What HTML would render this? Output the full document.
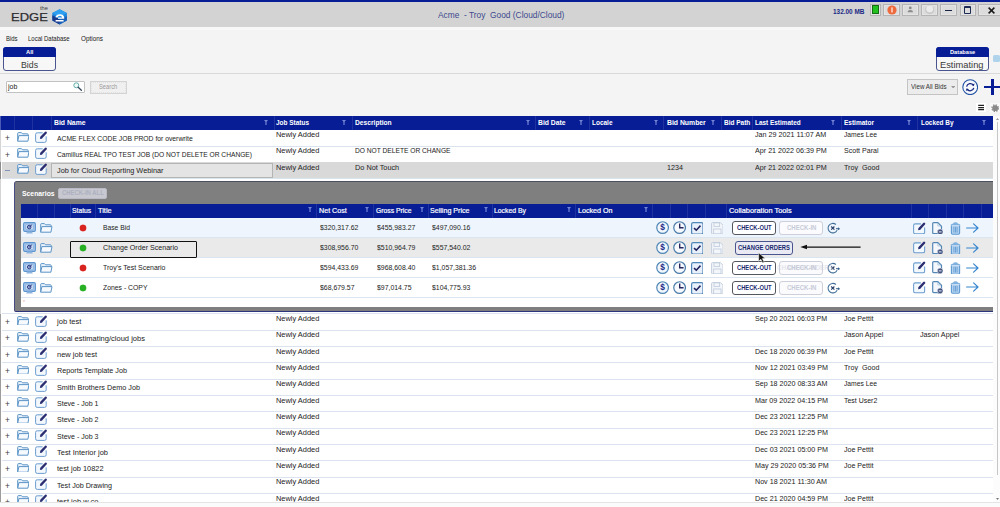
<!DOCTYPE html><html><head><meta charset="utf-8"><title>The EDGE - Bids</title><style>
html,body{margin:0;padding:0}
body{width:1000px;height:507px;overflow:hidden;position:relative;background:#f4f4f4;font-family:"Liberation Sans", sans-serif;}
.b{position:absolute;box-sizing:border-box;display:block}
.t{position:absolute;white-space:pre;}

</style></head><body>
<div class="b" style="left:0px;top:0px;width:1000px;height:2.2px;background:#061d96;"></div>
<div class="b" style="left:0px;top:2.2px;width:1000px;height:25px;background:#d3d3d3;"></div>
<div class="b" style="left:0px;top:27.2px;width:1000px;height:3.2px;background:#f8f8f8;"></div>
<div class="t" style="left:11.2px;top:11.20px;height:12px;line-height:12px;font-size:11.8px;color:#2d2d31;transform:scaleX(1.1006);transform-origin:0 50%;-webkit-text-stroke:0.25px #2d2d31;">EDGE</div>
<div class="t" style="left:40px;top:2.20px;height:12px;line-height:12px;font-size:5.4px;color:#3a3a3a;transform:scaleX(1.04);transform-origin:0 50%;">the</div>
<svg class="b" style="left:51.8px;top:9.2px;" width="15.2" height="15.6" viewBox="0 0 15.2 15.6"><path d="M7.6 0.2L14.9 4.1V11.5L7.6 15.4L0.3 11.5V4.1Z" fill="#1d86dc"/><path d="M7.6 0.2L14.9 4.1L7.6 8L0.3 4.1Z" fill="#2f9ff0"/><path d="M0.3 6.2L7.6 10V15.4L0.3 11.5Z" fill="#1b3a8e"/><path d="M7.6 10L14.9 7.2V11.5L7.6 15.4Z" fill="#1a5fb8"/><path d="M3.4 8.2Q4.4 5 8 5.2Q11.6 5.2 12.2 8.2V9.8H6V8.4H10.2Q9.6 6.8 7.8 6.8Q6 6.8 5.4 8.6Z" fill="#fff"/><path d="M3.6 11H11.6V12.5H3.6Z" fill="#fff"/></svg>
<div class="t" style="left:438.4px;top:9.80px;height:12px;line-height:12px;font-size:8.2px;color:#3c4a8e;transform:scaleX(1.0212);transform-origin:0 50%;">Acme  - Troy  Good (Cloud/Cloud)</div>
<div class="t" style="left:832.6px;top:5.50px;height:12px;line-height:12px;font-size:6.6px;color:#1b2a86;font-weight:bold;transform:scaleX(0.9732);transform-origin:0 50%;">132.00 MB</div>
<div class="b" style="left:870.4px;top:3.9px;width:10.4px;height:11.9px;background:#dcdcdc;border:1px solid #b4b4b4;box-shadow:inset 0 0 0 0.6px #e9e9e9;"></div>
<div class="b" style="left:872.4px;top:5.2px;width:6.4px;height:9px;background:#22c11f;border:1px solid #176d15;"></div>
<div class="b" style="left:883px;top:3.9px;width:16.8px;height:11.9px;background:#dcdcdc;border:1px solid #b4b4b4;box-shadow:inset 0 0 0 0.6px #e9e9e9;"></div>
<svg class="b" style="left:886.8px;top:4.8px;" width="10" height="10" viewBox="0 0 10 10"><circle cx="5" cy="5" r="4.6" fill="#ee6a3c"/><rect x="4.3" y="2.2" width="1.4" height="5.4" rx="0.6" fill="#fbe3d8"/></svg>
<div class="b" style="left:902px;top:3.9px;width:16.6px;height:11.9px;background:#dcdcdc;border:1px solid #b4b4b4;box-shadow:inset 0 0 0 0.6px #e9e9e9;"></div>
<svg class="b" style="left:907.1px;top:6.4px;" width="6.6" height="6.8" viewBox="0 0 8 8"><circle cx="4" cy="2.2" r="1.7" fill="#8b8b8b"/><path d="M0.8 7.4Q0.8 4.6 4 4.6Q7.2 4.6 7.2 7.4Z" fill="#8b8b8b"/></svg>
<div class="b" style="left:921px;top:3.9px;width:17px;height:11.9px;background:#dcdcdc;border:1px solid #b4b4b4;box-shadow:inset 0 0 0 0.6px #e9e9e9;"></div>
<svg class="b" style="left:924.9px;top:5.3px;" width="9.4" height="9.4" viewBox="0 0 9.4 9.4"><circle cx="4.7" cy="4.7" r="4.5" fill="#c6c6c6"/><circle cx="4.7" cy="3.9" r="3.5" fill="#ebebeb"/></svg>
<div class="b" style="left:940px;top:3.9px;width:17px;height:11.9px;background:#dcdcdc;border:1px solid #b4b4b4;box-shadow:inset 0 0 0 0.6px #e9e9e9;"></div>
<div class="b" style="left:945.2px;top:9.5px;width:7.2px;height:1.3px;background:#1a2346;"></div>
<div class="b" style="left:959.5px;top:3.9px;width:16.4px;height:11.9px;background:#dcdcdc;border:1px solid #b4b4b4;box-shadow:inset 0 0 0 0.6px #e9e9e9;"></div>
<div class="b" style="left:963.9px;top:6.2px;width:7.6px;height:7.5px;border:1.2px solid #1c2a56;border-top-width:2.6px;border-radius:1px;"></div>
<div class="b" style="left:978px;top:3.9px;width:24px;height:11.9px;background:#dcdcdc;border:1px solid #b4b4b4;box-shadow:inset 0 0 0 0.6px #e9e9e9;"></div>
<svg class="b" style="left:988.4px;top:6.6px;" width="7" height="7" viewBox="0 0 7 7"><path d="M0.6 0.6L6.4 6.4M6.4 0.6L0.6 6.4" stroke="#1a1a1a" stroke-width="1.5"/></svg>
<div class="t" style="left:5.9px;top:32.60px;height:12px;line-height:12px;font-size:6.6px;color:#1a1a1a;transform:scaleX(0.9043);transform-origin:0 50%;">Bids</div>
<div class="t" style="left:28px;top:32.60px;height:12px;line-height:12px;font-size:6.6px;color:#1a1a1a;transform:scaleX(0.9099);transform-origin:0 50%;">Local Database</div>
<div class="t" style="left:80.5px;top:32.60px;height:12px;line-height:12px;font-size:6.6px;color:#1a1a1a;transform:scaleX(0.9677);transform-origin:0 50%;">Options</div>
<div class="b" style="left:2.5px;top:47px;width:53.5px;height:23.5px;background:#f7f7f7;border:1px solid #4a558f;border-radius:3px;"></div>
<div class="b" style="left:2.5px;top:47px;width:53.5px;height:9.8px;background:#061d96;border-radius:3px 3px 0 0;"></div>
<div class="t" style="left:25.6px;top:46.00px;height:12px;line-height:12px;font-size:6.2px;color:#fff;font-weight:bold;transform:scaleX(0.9341);transform-origin:0 50%;">All</div>
<div class="t" style="left:20.7px;top:58.80px;height:12px;line-height:12px;font-size:9.4px;color:#3a3a3a;transform:scaleX(0.937);transform-origin:0 50%;">Bids</div>
<div class="b" style="left:935.6px;top:47px;width:53.2px;height:23.5px;background:#f7f7f7;border:1px solid #4a558f;border-radius:3px;"></div>
<div class="b" style="left:935.6px;top:47px;width:53.2px;height:9.8px;background:#061d96;border-radius:3px 3px 0 0;"></div>
<div class="t" style="left:949.8px;top:46.00px;height:12px;line-height:12px;font-size:6.2px;color:#fff;font-weight:bold;transform:scaleX(0.9158);transform-origin:0 50%;">Database</div>
<div class="t" style="left:940.4px;top:58.80px;height:12px;line-height:12px;font-size:9.4px;color:#3a3a3a;transform:scaleX(0.9936);transform-origin:0 50%;">Estimating</div>
<div class="b" style="left:993px;top:55px;width:7px;height:7px;background:#9fcbea;border-radius:1.5px;opacity:.8"></div>
<div class="b" style="left:0px;top:73px;width:1000px;height:1px;background:#d9d9d9;"></div>
<div class="b" style="left:6.3px;top:81px;width:78.4px;height:12.2px;background:#fff;border:1px solid #c2c2c2;border-radius:1px;"></div>
<div class="t" style="left:7.7px;top:81.40px;height:12px;line-height:12px;font-size:7.2px;color:#222;transform:scaleX(0.9694);transform-origin:0 50%;">job</div>
<svg class="b" style="left:73.2px;top:82.2px;" width="9.4" height="9.4" viewBox="0 0 9.4 9.4"><circle cx="3.3" cy="3.3" r="2.5" fill="#eefaf8" stroke="#55a5a2" stroke-width="0.9"/><path d="M5.2 5.2L8.4 8.2" stroke="#34465e" stroke-width="1.3" stroke-linecap="round"/></svg>
<div class="b" style="left:90.2px;top:80.6px;width:36.7px;height:13px;background:#f0f0f0;border:1px solid #d4d4d4;outline:1px dotted #e2e2e2;outline-offset:-2.5px;"></div>
<div class="t" style="left:99.4px;top:81.30px;height:12px;line-height:12px;font-size:6.6px;color:#9a9a9a;transform:scaleX(0.8706);transform-origin:0 50%;">Search</div>
<div class="b" style="left:907px;top:79.4px;width:50.6px;height:15.2px;background:#ececec;border:1px solid #c4c4c4;"></div>
<div class="t" style="left:910.5px;top:81.00px;height:12px;line-height:12px;font-size:6.8px;color:#333;transform:scaleX(0.915);transform-origin:0 50%;">View All Bids</div>
<svg class="b" style="left:950.6px;top:86px;" width="4" height="2.4" viewBox="0 0 4 2.4"><path d="M0 0H4.4L2.2 2.6Z" fill="#9a9a9a"/></svg>
<svg class="b" style="left:961.7px;top:78.8px;" width="16.4" height="16.4" viewBox="0 0 16.4 16.4"><circle cx="8.2" cy="8.2" r="7.4" fill="#f7fafd" stroke="#1f4fa3" stroke-width="1.05"/><path d="M4.6 7.6A3.8 3.8 0 0 1 11.4 6.2M11.8 8.8A3.8 3.8 0 0 1 5 10.2" fill="none" stroke="#1b2a86" stroke-width="1.3"/><path d="M12.6 4.4L11.8 7.2L9.4 5.8ZM3.8 12L4.6 9.2L7 10.6Z" fill="#1b2a86"/></svg>
<div class="b" style="left:984.4px;top:85.7px;width:16px;height:2.7px;background:#061d96;"></div>
<div class="b" style="left:991.2px;top:79px;width:2.7px;height:16px;background:#061d96;"></div>
<div class="b" style="left:975.8px;top:103px;width:10.1px;height:9px;background:#fff;"></div>
<svg class="b" style="left:978px;top:104px;" width="6.4" height="7" viewBox="0 0 6.4 7"><path d="M0.2 1.4H6.1M0.2 3.55H6.1M0.2 5.6H6.1" stroke="#222" stroke-width="1.3"/></svg>
<div class="b" style="left:990px;top:103px;width:10px;height:9px;background:#fafafa;"></div>
<svg class="b" style="left:990.5px;top:103.5px;" width="8.4" height="8.4" viewBox="0 0 8.4 8.4"><circle cx="4.2" cy="4.2" r="2.9" fill="#8a8a8a"/><circle cx="4.2" cy="4.2" r="3.3" fill="none" stroke="#8a8a8a" stroke-width="1.3" stroke-dasharray="1.3 1.3"/></svg>
<div class="b" style="left:0px;top:116px;width:1000px;height:391px;background:#fff;"></div>
<div class="b" style="left:0px;top:129.7px;width:1.3px;height:378px;background:#d4d4d4;"></div>
<div class="b" style="left:0px;top:162.4px;width:1.3px;height:16.2px;background:#8c8c8c;"></div>
<div class="b" style="left:0px;top:313.5px;width:1.3px;height:194px;background:#9c9c9c;"></div>
<div class="b" style="left:0px;top:116.2px;width:992.8px;height:13.5px;background:#061d96;border-left:1.3px solid #4b5ab4;"></div>
<div class="b" style="left:14px;top:116.2px;width:1px;height:13.5px;background:#1f32a0;"></div>
<div class="b" style="left:32px;top:116.2px;width:1px;height:13.5px;background:#1f32a0;"></div>
<div class="b" style="left:51px;top:116.2px;width:1px;height:13.5px;background:#1f32a0;"></div>
<div class="b" style="left:273.7px;top:116.2px;width:1px;height:13.5px;background:#1f32a0;"></div>
<div class="b" style="left:351.5px;top:116.2px;width:1px;height:13.5px;background:#1f32a0;"></div>
<div class="b" style="left:535.2px;top:116.2px;width:1px;height:13.5px;background:#1f32a0;"></div>
<div class="b" style="left:588.7px;top:116.2px;width:1px;height:13.5px;background:#1f32a0;"></div>
<div class="b" style="left:663.2px;top:116.2px;width:1px;height:13.5px;background:#1f32a0;"></div>
<div class="b" style="left:720.7px;top:116.2px;width:1px;height:13.5px;background:#1f32a0;"></div>
<div class="b" style="left:752px;top:116.2px;width:1px;height:13.5px;background:#1f32a0;"></div>
<div class="b" style="left:840.7px;top:116.2px;width:1px;height:13.5px;background:#1f32a0;"></div>
<div class="b" style="left:917px;top:116.2px;width:1px;height:13.5px;background:#1f32a0;"></div>
<div class="t" style="left:53.6px;top:117.20px;height:12px;line-height:12px;font-size:7.6px;color:#fff;font-weight:bold;transform:scaleX(0.8992);transform-origin:0 50%;">Bid Name</div>
<div class="t" style="left:276.2px;top:117.20px;height:12px;line-height:12px;font-size:7.6px;color:#fff;font-weight:bold;transform:scaleX(0.8499);transform-origin:0 50%;">Job Status</div>
<div class="t" style="left:354.5px;top:117.20px;height:12px;line-height:12px;font-size:7.6px;color:#fff;font-weight:bold;transform:scaleX(0.8784);transform-origin:0 50%;">Description</div>
<div class="t" style="left:538px;top:117.20px;height:12px;line-height:12px;font-size:7.6px;color:#fff;font-weight:bold;transform:scaleX(0.8925);transform-origin:0 50%;">Bid Date</div>
<div class="t" style="left:592px;top:117.20px;height:12px;line-height:12px;font-size:7.6px;color:#fff;font-weight:bold;transform:scaleX(0.8519);transform-origin:0 50%;">Locale</div>
<div class="t" style="left:666.7px;top:117.20px;height:12px;line-height:12px;font-size:7.6px;color:#fff;font-weight:bold;transform:scaleX(0.9013);transform-origin:0 50%;">Bid Number</div>
<div class="t" style="left:723.7px;top:117.20px;height:12px;line-height:12px;font-size:7.6px;color:#fff;font-weight:bold;transform:scaleX(0.8535);transform-origin:0 50%;">Bid Path</div>
<div class="t" style="left:755px;top:117.20px;height:12px;line-height:12px;font-size:7.6px;color:#fff;font-weight:bold;transform:scaleX(0.8458);transform-origin:0 50%;">Last Estimated</div>
<div class="t" style="left:844.2px;top:117.20px;height:12px;line-height:12px;font-size:7.6px;color:#fff;font-weight:bold;transform:scaleX(0.8564);transform-origin:0 50%;">Estimator</div>
<div class="t" style="left:920.5px;top:117.20px;height:12px;line-height:12px;font-size:7.6px;color:#fff;font-weight:bold;transform:scaleX(0.8462);transform-origin:0 50%;">Locked By</div>
<svg class="b" style="left:264px;top:119.9px;" width="4" height="5" viewBox="0 0 4 5"><path d="M0 0H4L2.6 1.8V5H1.4V1.8Z" fill="#7585d6"/></svg>
<svg class="b" style="left:341.7px;top:119.9px;" width="4" height="5" viewBox="0 0 4 5"><path d="M0 0H4L2.6 1.8V5H1.4V1.8Z" fill="#7585d6"/></svg>
<svg class="b" style="left:525.5px;top:119.9px;" width="4" height="5" viewBox="0 0 4 5"><path d="M0 0H4L2.6 1.8V5H1.4V1.8Z" fill="#7585d6"/></svg>
<svg class="b" style="left:578.7px;top:119.9px;" width="4" height="5" viewBox="0 0 4 5"><path d="M0 0H4L2.6 1.8V5H1.4V1.8Z" fill="#7585d6"/></svg>
<svg class="b" style="left:654.2px;top:119.9px;" width="4" height="5" viewBox="0 0 4 5"><path d="M0 0H4L2.6 1.8V5H1.4V1.8Z" fill="#7585d6"/></svg>
<svg class="b" style="left:711.2px;top:119.9px;" width="4" height="5" viewBox="0 0 4 5"><path d="M0 0H4L2.6 1.8V5H1.4V1.8Z" fill="#7585d6"/></svg>
<svg class="b" style="left:831.2px;top:119.9px;" width="4" height="5" viewBox="0 0 4 5"><path d="M0 0H4L2.6 1.8V5H1.4V1.8Z" fill="#7585d6"/></svg>
<svg class="b" style="left:907.2px;top:119.9px;" width="4" height="5" viewBox="0 0 4 5"><path d="M0 0H4L2.6 1.8V5H1.4V1.8Z" fill="#7585d6"/></svg>
<svg class="b" style="left:982.2px;top:119.9px;" width="4" height="5" viewBox="0 0 4 5"><path d="M0 0H4L2.6 1.8V5H1.4V1.8Z" fill="#7585d6"/></svg>
<div class="b" style="left:1.5px;top:145.7px;width:991.3px;height:1px;background:#dae3ee;"></div>
<div class="t" style="left:5.1px;top:132.40px;height:12px;line-height:12px;font-size:8.4px;color:#3a3a3a;">+</div>
<svg class="b" style="left:16.5px;top:131.89999999999998px;" width="12.6" height="9.8" viewBox="0 0 12.6 9.8"><path d="M0.7 9.2V1.4Q0.7 0.6 1.5 0.6H4.4L5.5 1.8H10.4Q11.2 1.8 11.2 2.6V3.6" fill="#eaf3fc" stroke="#5b94c6" stroke-width="1"/><path d="M0.7 9.2L1.9 3.6H12L10.9 9.2Z" fill="#f6fafe" stroke="#5b94c6" stroke-width="1" stroke-linejoin="round"/></svg>
<svg class="b" style="left:34.900000000000006px;top:130.79999999999998px;" width="12.6" height="12.0" viewBox="0 0 12.6 12"><path d="M7.6 1.8H2.2Q0.6 1.8 0.6 3.4V9.8Q0.6 11.4 2.2 11.4H9.6Q11.2 11.4 11.2 9.8V5.4" fill="#f3f8fd" stroke="#6a9dd0" stroke-width="1"/><path d="M6.6 6.1L10.7 1.7" stroke="#2b2f72" stroke-width="2.3" stroke-linecap="round"/><path d="M4.9 8L5.4 5.5L7.4 7.4Z" fill="#2b2f72"/></svg>
<div class="t" style="left:57.2px;top:132.60px;height:12px;line-height:12px;font-size:7.4px;color:#222;transform:scaleX(0.9179);transform-origin:0 50%;">ACME FLEX CODE JOB PROD for overwrite</div>
<div class="t" style="left:276.2px;top:129.20px;height:12px;line-height:12px;font-size:7.4px;color:#222;transform:scaleX(1.0037);transform-origin:0 50%;">Newly Added</div>
<div class="t" style="left:754.5px;top:129.20px;height:12px;line-height:12px;font-size:7.4px;color:#222;transform:scaleX(0.9697);transform-origin:0 50%;">Jan 29 2021 11:07 AM</div>
<div class="t" style="left:843.7px;top:129.20px;height:12px;line-height:12px;font-size:7.4px;color:#222;transform:scaleX(0.9127);transform-origin:0 50%;">James Lee</div>
<div class="b" style="left:1.5px;top:161.89999999999998px;width:991.3px;height:1px;background:#dae3ee;"></div>
<div class="t" style="left:5.1px;top:148.60px;height:12px;line-height:12px;font-size:8.4px;color:#3a3a3a;">+</div>
<svg class="b" style="left:16.5px;top:148.09999999999997px;" width="12.6" height="9.8" viewBox="0 0 12.6 9.8"><path d="M0.7 9.2V1.4Q0.7 0.6 1.5 0.6H4.4L5.5 1.8H10.4Q11.2 1.8 11.2 2.6V3.6" fill="#eaf3fc" stroke="#5b94c6" stroke-width="1"/><path d="M0.7 9.2L1.9 3.6H12L10.9 9.2Z" fill="#f6fafe" stroke="#5b94c6" stroke-width="1" stroke-linejoin="round"/></svg>
<svg class="b" style="left:34.900000000000006px;top:146.99999999999997px;" width="12.6" height="12.0" viewBox="0 0 12.6 12"><path d="M7.6 1.8H2.2Q0.6 1.8 0.6 3.4V9.8Q0.6 11.4 2.2 11.4H9.6Q11.2 11.4 11.2 9.8V5.4" fill="#f3f8fd" stroke="#6a9dd0" stroke-width="1"/><path d="M6.6 6.1L10.7 1.7" stroke="#2b2f72" stroke-width="2.3" stroke-linecap="round"/><path d="M4.9 8L5.4 5.5L7.4 7.4Z" fill="#2b2f72"/></svg>
<div class="t" style="left:57.2px;top:148.80px;height:12px;line-height:12px;font-size:7.4px;color:#222;transform:scaleX(0.8993);transform-origin:0 50%;">Camillus REAL TPO TEST JOB (DO NOT DELETE OR CHANGE)</div>
<div class="t" style="left:276.2px;top:145.40px;height:12px;line-height:12px;font-size:7.4px;color:#222;transform:scaleX(1.0037);transform-origin:0 50%;">Newly Added</div>
<div class="t" style="left:354.5px;top:145.40px;height:12px;line-height:12px;font-size:7.4px;color:#222;transform:scaleX(0.899);transform-origin:0 50%;">DO NOT DELETE OR CHANGE</div>
<div class="t" style="left:754.5px;top:145.40px;height:12px;line-height:12px;font-size:7.4px;color:#222;transform:scaleX(0.9693);transform-origin:0 50%;">Apr 21 2022 06:39 PM</div>
<div class="t" style="left:843.7px;top:145.40px;height:12px;line-height:12px;font-size:7.4px;color:#222;transform:scaleX(0.9542);transform-origin:0 50%;">Scott Paral</div>
<div class="b" style="left:1.5px;top:162.4px;width:991.3px;height:16.2px;background:#d9d9d9;"></div>
<div class="b" style="left:51.2px;top:163.0px;width:221.6px;height:15.0px;background:#e4e4e4;border:1px solid #b4b4b4;"></div>
<div class="b" style="left:1.5px;top:178.1px;width:991.3px;height:1px;background:#dae3ee;"></div>
<div class="b" style="left:5px;top:170.4px;width:5.2px;height:1.1px;background:#8093b8;"></div>
<svg class="b" style="left:16.5px;top:164.29999999999998px;" width="12.6" height="9.8" viewBox="0 0 12.6 9.8"><path d="M0.7 9.2V1.4Q0.7 0.6 1.5 0.6H4.4L5.5 1.8H10.4Q11.2 1.8 11.2 2.6V3.6" fill="#eaf3fc" stroke="#5b94c6" stroke-width="1"/><path d="M0.7 9.2L1.9 3.6H12L10.9 9.2Z" fill="#f6fafe" stroke="#5b94c6" stroke-width="1" stroke-linejoin="round"/></svg>
<svg class="b" style="left:34.900000000000006px;top:163.2px;" width="12.6" height="12.0" viewBox="0 0 12.6 12"><path d="M7.6 1.8H2.2Q0.6 1.8 0.6 3.4V9.8Q0.6 11.4 2.2 11.4H9.6Q11.2 11.4 11.2 9.8V5.4" fill="#f3f8fd" stroke="#6a9dd0" stroke-width="1"/><path d="M6.6 6.1L10.7 1.7" stroke="#2b2f72" stroke-width="2.3" stroke-linecap="round"/><path d="M4.9 8L5.4 5.5L7.4 7.4Z" fill="#2b2f72"/></svg>
<div class="t" style="left:57.2px;top:165.00px;height:12px;line-height:12px;font-size:7.4px;color:#222;transform:scaleX(0.9907);transform-origin:0 50%;">Job for Cloud Reporting Webinar</div>
<div class="t" style="left:276.2px;top:161.60px;height:12px;line-height:12px;font-size:7.4px;color:#222;transform:scaleX(1.0037);transform-origin:0 50%;">Newly Added</div>
<div class="t" style="left:354.5px;top:161.60px;height:12px;line-height:12px;font-size:7.4px;color:#222;transform:scaleX(0.9898);transform-origin:0 50%;">Do Not Touch</div>
<div class="t" style="left:666.5px;top:161.60px;height:12px;line-height:12px;font-size:7.4px;color:#222;transform:scaleX(0.9725);transform-origin:0 50%;">1234</div>
<div class="t" style="left:754.5px;top:161.60px;height:12px;line-height:12px;font-size:7.4px;color:#222;transform:scaleX(0.9693);transform-origin:0 50%;">Apr 21 2022 02:01 PM</div>
<div class="t" style="left:843.7px;top:161.60px;height:12px;line-height:12px;font-size:7.4px;color:#222;transform:scaleX(0.9672);transform-origin:0 50%;">Troy  Good</div>
<div class="b" style="left:1.5px;top:313.2px;width:991.3px;height:1px;background:#dae3ee;"></div>
<div class="b" style="left:1.5px;top:329.53999999999996px;width:991.3px;height:1px;background:#dae3ee;"></div>
<div class="t" style="left:5.1px;top:316.10px;height:12px;line-height:12px;font-size:8.4px;color:#3a3a3a;">+</div>
<svg class="b" style="left:16.5px;top:315.6px;" width="12.6" height="9.8" viewBox="0 0 12.6 9.8"><path d="M0.7 9.2V1.4Q0.7 0.6 1.5 0.6H4.4L5.5 1.8H10.4Q11.2 1.8 11.2 2.6V3.6" fill="#eaf3fc" stroke="#5b94c6" stroke-width="1"/><path d="M0.7 9.2L1.9 3.6H12L10.9 9.2Z" fill="#f6fafe" stroke="#5b94c6" stroke-width="1" stroke-linejoin="round"/></svg>
<svg class="b" style="left:34.900000000000006px;top:314.5px;" width="12.6" height="12.0" viewBox="0 0 12.6 12"><path d="M7.6 1.8H2.2Q0.6 1.8 0.6 3.4V9.8Q0.6 11.4 2.2 11.4H9.6Q11.2 11.4 11.2 9.8V5.4" fill="#f3f8fd" stroke="#6a9dd0" stroke-width="1"/><path d="M6.6 6.1L10.7 1.7" stroke="#2b2f72" stroke-width="2.3" stroke-linecap="round"/><path d="M4.9 8L5.4 5.5L7.4 7.4Z" fill="#2b2f72"/></svg>
<div class="t" style="left:57.2px;top:316.30px;height:12px;line-height:12px;font-size:7.4px;color:#222;transform:scaleX(1.0275);transform-origin:0 50%;">job test</div>
<div class="t" style="left:276.2px;top:312.90px;height:12px;line-height:12px;font-size:7.4px;color:#222;transform:scaleX(1.0037);transform-origin:0 50%;">Newly Added</div>
<div class="t" style="left:754.5px;top:312.90px;height:12px;line-height:12px;font-size:7.4px;color:#222;transform:scaleX(0.9549);transform-origin:0 50%;">Sep 20 2021 06:03 PM</div>
<div class="t" style="left:843.7px;top:312.90px;height:12px;line-height:12px;font-size:7.4px;color:#222;transform:scaleX(0.9574);transform-origin:0 50%;">Joe Pettit</div>
<div class="b" style="left:1.5px;top:345.87999999999994px;width:991.3px;height:1px;background:#dae3ee;"></div>
<div class="t" style="left:5.1px;top:332.44px;height:12px;line-height:12px;font-size:8.4px;color:#3a3a3a;">+</div>
<svg class="b" style="left:16.5px;top:331.94px;" width="12.6" height="9.8" viewBox="0 0 12.6 9.8"><path d="M0.7 9.2V1.4Q0.7 0.6 1.5 0.6H4.4L5.5 1.8H10.4Q11.2 1.8 11.2 2.6V3.6" fill="#eaf3fc" stroke="#5b94c6" stroke-width="1"/><path d="M0.7 9.2L1.9 3.6H12L10.9 9.2Z" fill="#f6fafe" stroke="#5b94c6" stroke-width="1" stroke-linejoin="round"/></svg>
<svg class="b" style="left:34.900000000000006px;top:330.84px;" width="12.6" height="12.0" viewBox="0 0 12.6 12"><path d="M7.6 1.8H2.2Q0.6 1.8 0.6 3.4V9.8Q0.6 11.4 2.2 11.4H9.6Q11.2 11.4 11.2 9.8V5.4" fill="#f3f8fd" stroke="#6a9dd0" stroke-width="1"/><path d="M6.6 6.1L10.7 1.7" stroke="#2b2f72" stroke-width="2.3" stroke-linecap="round"/><path d="M4.9 8L5.4 5.5L7.4 7.4Z" fill="#2b2f72"/></svg>
<div class="t" style="left:57.2px;top:332.64px;height:12px;line-height:12px;font-size:7.4px;color:#222;transform:scaleX(1.0199);transform-origin:0 50%;">local estimating/cloud jobs</div>
<div class="t" style="left:276.2px;top:329.24px;height:12px;line-height:12px;font-size:7.4px;color:#222;transform:scaleX(1.0037);transform-origin:0 50%;">Newly Added</div>
<div class="t" style="left:843.7px;top:329.24px;height:12px;line-height:12px;font-size:7.4px;color:#222;transform:scaleX(0.9756);transform-origin:0 50%;">Jason Appel</div>
<div class="t" style="left:920px;top:329.24px;height:12px;line-height:12px;font-size:7.4px;color:#222;transform:scaleX(0.9756);transform-origin:0 50%;">Jason Appel</div>
<div class="b" style="left:1.5px;top:362.21999999999997px;width:991.3px;height:1px;background:#dae3ee;"></div>
<div class="t" style="left:5.1px;top:348.78px;height:12px;line-height:12px;font-size:8.4px;color:#3a3a3a;">+</div>
<svg class="b" style="left:16.5px;top:348.28000000000003px;" width="12.6" height="9.8" viewBox="0 0 12.6 9.8"><path d="M0.7 9.2V1.4Q0.7 0.6 1.5 0.6H4.4L5.5 1.8H10.4Q11.2 1.8 11.2 2.6V3.6" fill="#eaf3fc" stroke="#5b94c6" stroke-width="1"/><path d="M0.7 9.2L1.9 3.6H12L10.9 9.2Z" fill="#f6fafe" stroke="#5b94c6" stroke-width="1" stroke-linejoin="round"/></svg>
<svg class="b" style="left:34.900000000000006px;top:347.18px;" width="12.6" height="12.0" viewBox="0 0 12.6 12"><path d="M7.6 1.8H2.2Q0.6 1.8 0.6 3.4V9.8Q0.6 11.4 2.2 11.4H9.6Q11.2 11.4 11.2 9.8V5.4" fill="#f3f8fd" stroke="#6a9dd0" stroke-width="1"/><path d="M6.6 6.1L10.7 1.7" stroke="#2b2f72" stroke-width="2.3" stroke-linecap="round"/><path d="M4.9 8L5.4 5.5L7.4 7.4Z" fill="#2b2f72"/></svg>
<div class="t" style="left:57.2px;top:348.98px;height:12px;line-height:12px;font-size:7.4px;color:#222;transform:scaleX(1.0139);transform-origin:0 50%;">new job test</div>
<div class="t" style="left:276.2px;top:345.58px;height:12px;line-height:12px;font-size:7.4px;color:#222;transform:scaleX(1.0037);transform-origin:0 50%;">Newly Added</div>
<div class="t" style="left:754.5px;top:345.58px;height:12px;line-height:12px;font-size:7.4px;color:#222;transform:scaleX(0.9549);transform-origin:0 50%;">Dec 18 2020 06:39 PM</div>
<div class="t" style="left:843.7px;top:345.58px;height:12px;line-height:12px;font-size:7.4px;color:#222;transform:scaleX(0.9574);transform-origin:0 50%;">Joe Pettit</div>
<div class="b" style="left:1.5px;top:378.55999999999995px;width:991.3px;height:1px;background:#dae3ee;"></div>
<div class="t" style="left:5.1px;top:365.12px;height:12px;line-height:12px;font-size:8.4px;color:#3a3a3a;">+</div>
<svg class="b" style="left:16.5px;top:364.62px;" width="12.6" height="9.8" viewBox="0 0 12.6 9.8"><path d="M0.7 9.2V1.4Q0.7 0.6 1.5 0.6H4.4L5.5 1.8H10.4Q11.2 1.8 11.2 2.6V3.6" fill="#eaf3fc" stroke="#5b94c6" stroke-width="1"/><path d="M0.7 9.2L1.9 3.6H12L10.9 9.2Z" fill="#f6fafe" stroke="#5b94c6" stroke-width="1" stroke-linejoin="round"/></svg>
<svg class="b" style="left:34.900000000000006px;top:363.52px;" width="12.6" height="12.0" viewBox="0 0 12.6 12"><path d="M7.6 1.8H2.2Q0.6 1.8 0.6 3.4V9.8Q0.6 11.4 2.2 11.4H9.6Q11.2 11.4 11.2 9.8V5.4" fill="#f3f8fd" stroke="#6a9dd0" stroke-width="1"/><path d="M6.6 6.1L10.7 1.7" stroke="#2b2f72" stroke-width="2.3" stroke-linecap="round"/><path d="M4.9 8L5.4 5.5L7.4 7.4Z" fill="#2b2f72"/></svg>
<div class="t" style="left:57.2px;top:365.32px;height:12px;line-height:12px;font-size:7.4px;color:#222;transform:scaleX(0.9754);transform-origin:0 50%;">Reports Template Job</div>
<div class="t" style="left:276.2px;top:361.92px;height:12px;line-height:12px;font-size:7.4px;color:#222;transform:scaleX(1.0037);transform-origin:0 50%;">Newly Added</div>
<div class="t" style="left:754.5px;top:361.92px;height:12px;line-height:12px;font-size:7.4px;color:#222;transform:scaleX(0.9655);transform-origin:0 50%;">Nov 12 2021 03:49 PM</div>
<div class="t" style="left:843.7px;top:361.92px;height:12px;line-height:12px;font-size:7.4px;color:#222;transform:scaleX(0.9672);transform-origin:0 50%;">Troy  Good</div>
<div class="b" style="left:1.5px;top:394.9px;width:991.3px;height:1px;background:#dae3ee;"></div>
<div class="t" style="left:5.1px;top:381.46px;height:12px;line-height:12px;font-size:8.4px;color:#3a3a3a;">+</div>
<svg class="b" style="left:16.5px;top:380.96000000000004px;" width="12.6" height="9.8" viewBox="0 0 12.6 9.8"><path d="M0.7 9.2V1.4Q0.7 0.6 1.5 0.6H4.4L5.5 1.8H10.4Q11.2 1.8 11.2 2.6V3.6" fill="#eaf3fc" stroke="#5b94c6" stroke-width="1"/><path d="M0.7 9.2L1.9 3.6H12L10.9 9.2Z" fill="#f6fafe" stroke="#5b94c6" stroke-width="1" stroke-linejoin="round"/></svg>
<svg class="b" style="left:34.900000000000006px;top:379.86px;" width="12.6" height="12.0" viewBox="0 0 12.6 12"><path d="M7.6 1.8H2.2Q0.6 1.8 0.6 3.4V9.8Q0.6 11.4 2.2 11.4H9.6Q11.2 11.4 11.2 9.8V5.4" fill="#f3f8fd" stroke="#6a9dd0" stroke-width="1"/><path d="M6.6 6.1L10.7 1.7" stroke="#2b2f72" stroke-width="2.3" stroke-linecap="round"/><path d="M4.9 8L5.4 5.5L7.4 7.4Z" fill="#2b2f72"/></svg>
<div class="t" style="left:57.2px;top:381.66px;height:12px;line-height:12px;font-size:7.4px;color:#222;transform:scaleX(0.9808);transform-origin:0 50%;">Smith Brothers Demo Job</div>
<div class="t" style="left:276.2px;top:378.26px;height:12px;line-height:12px;font-size:7.4px;color:#222;transform:scaleX(1.0037);transform-origin:0 50%;">Newly Added</div>
<div class="t" style="left:754.5px;top:378.26px;height:12px;line-height:12px;font-size:7.4px;color:#222;transform:scaleX(0.9641);transform-origin:0 50%;">Sep 18 2020 08:33 AM</div>
<div class="t" style="left:843.7px;top:378.26px;height:12px;line-height:12px;font-size:7.4px;color:#222;transform:scaleX(0.9127);transform-origin:0 50%;">James Lee</div>
<div class="b" style="left:1.5px;top:411.23999999999995px;width:991.3px;height:1px;background:#dae3ee;"></div>
<div class="t" style="left:5.1px;top:397.80px;height:12px;line-height:12px;font-size:8.4px;color:#3a3a3a;">+</div>
<svg class="b" style="left:16.5px;top:397.3px;" width="12.6" height="9.8" viewBox="0 0 12.6 9.8"><path d="M0.7 9.2V1.4Q0.7 0.6 1.5 0.6H4.4L5.5 1.8H10.4Q11.2 1.8 11.2 2.6V3.6" fill="#eaf3fc" stroke="#5b94c6" stroke-width="1"/><path d="M0.7 9.2L1.9 3.6H12L10.9 9.2Z" fill="#f6fafe" stroke="#5b94c6" stroke-width="1" stroke-linejoin="round"/></svg>
<svg class="b" style="left:34.900000000000006px;top:396.2px;" width="12.6" height="12.0" viewBox="0 0 12.6 12"><path d="M7.6 1.8H2.2Q0.6 1.8 0.6 3.4V9.8Q0.6 11.4 2.2 11.4H9.6Q11.2 11.4 11.2 9.8V5.4" fill="#f3f8fd" stroke="#6a9dd0" stroke-width="1"/><path d="M6.6 6.1L10.7 1.7" stroke="#2b2f72" stroke-width="2.3" stroke-linecap="round"/><path d="M4.9 8L5.4 5.5L7.4 7.4Z" fill="#2b2f72"/></svg>
<div class="t" style="left:57.2px;top:398.00px;height:12px;line-height:12px;font-size:7.4px;color:#222;transform:scaleX(0.953);transform-origin:0 50%;">Steve - Job 1</div>
<div class="t" style="left:276.2px;top:394.60px;height:12px;line-height:12px;font-size:7.4px;color:#222;transform:scaleX(1.0037);transform-origin:0 50%;">Newly Added</div>
<div class="t" style="left:754.5px;top:394.60px;height:12px;line-height:12px;font-size:7.4px;color:#222;transform:scaleX(0.9709);transform-origin:0 50%;">Mar 09 2022 04:15 PM</div>
<div class="t" style="left:843.7px;top:394.60px;height:12px;line-height:12px;font-size:7.4px;color:#222;transform:scaleX(0.9426);transform-origin:0 50%;">Test User2</div>
<div class="b" style="left:1.5px;top:427.58px;width:991.3px;height:1px;background:#dae3ee;"></div>
<div class="t" style="left:5.1px;top:414.14px;height:12px;line-height:12px;font-size:8.4px;color:#3a3a3a;">+</div>
<svg class="b" style="left:16.5px;top:413.64000000000004px;" width="12.6" height="9.8" viewBox="0 0 12.6 9.8"><path d="M0.7 9.2V1.4Q0.7 0.6 1.5 0.6H4.4L5.5 1.8H10.4Q11.2 1.8 11.2 2.6V3.6" fill="#eaf3fc" stroke="#5b94c6" stroke-width="1"/><path d="M0.7 9.2L1.9 3.6H12L10.9 9.2Z" fill="#f6fafe" stroke="#5b94c6" stroke-width="1" stroke-linejoin="round"/></svg>
<svg class="b" style="left:34.900000000000006px;top:412.54px;" width="12.6" height="12.0" viewBox="0 0 12.6 12"><path d="M7.6 1.8H2.2Q0.6 1.8 0.6 3.4V9.8Q0.6 11.4 2.2 11.4H9.6Q11.2 11.4 11.2 9.8V5.4" fill="#f3f8fd" stroke="#6a9dd0" stroke-width="1"/><path d="M6.6 6.1L10.7 1.7" stroke="#2b2f72" stroke-width="2.3" stroke-linecap="round"/><path d="M4.9 8L5.4 5.5L7.4 7.4Z" fill="#2b2f72"/></svg>
<div class="t" style="left:57.2px;top:414.34px;height:12px;line-height:12px;font-size:7.4px;color:#222;transform:scaleX(0.953);transform-origin:0 50%;">Steve - Job 2</div>
<div class="t" style="left:276.2px;top:410.94px;height:12px;line-height:12px;font-size:7.4px;color:#222;transform:scaleX(1.0037);transform-origin:0 50%;">Newly Added</div>
<div class="t" style="left:754.5px;top:410.94px;height:12px;line-height:12px;font-size:7.4px;color:#222;transform:scaleX(0.965);transform-origin:0 50%;">Dec 23 2021 12:25 PM</div>
<div class="b" style="left:1.5px;top:443.91999999999996px;width:991.3px;height:1px;background:#dae3ee;"></div>
<div class="t" style="left:5.1px;top:430.48px;height:12px;line-height:12px;font-size:8.4px;color:#3a3a3a;">+</div>
<svg class="b" style="left:16.5px;top:429.98px;" width="12.6" height="9.8" viewBox="0 0 12.6 9.8"><path d="M0.7 9.2V1.4Q0.7 0.6 1.5 0.6H4.4L5.5 1.8H10.4Q11.2 1.8 11.2 2.6V3.6" fill="#eaf3fc" stroke="#5b94c6" stroke-width="1"/><path d="M0.7 9.2L1.9 3.6H12L10.9 9.2Z" fill="#f6fafe" stroke="#5b94c6" stroke-width="1" stroke-linejoin="round"/></svg>
<svg class="b" style="left:34.900000000000006px;top:428.88px;" width="12.6" height="12.0" viewBox="0 0 12.6 12"><path d="M7.6 1.8H2.2Q0.6 1.8 0.6 3.4V9.8Q0.6 11.4 2.2 11.4H9.6Q11.2 11.4 11.2 9.8V5.4" fill="#f3f8fd" stroke="#6a9dd0" stroke-width="1"/><path d="M6.6 6.1L10.7 1.7" stroke="#2b2f72" stroke-width="2.3" stroke-linecap="round"/><path d="M4.9 8L5.4 5.5L7.4 7.4Z" fill="#2b2f72"/></svg>
<div class="t" style="left:57.2px;top:430.68px;height:12px;line-height:12px;font-size:7.4px;color:#222;transform:scaleX(0.953);transform-origin:0 50%;">Steve - Job 3</div>
<div class="t" style="left:276.2px;top:427.28px;height:12px;line-height:12px;font-size:7.4px;color:#222;transform:scaleX(1.0037);transform-origin:0 50%;">Newly Added</div>
<div class="t" style="left:754.5px;top:427.28px;height:12px;line-height:12px;font-size:7.4px;color:#222;transform:scaleX(0.965);transform-origin:0 50%;">Dec 23 2021 12:25 PM</div>
<div class="b" style="left:1.5px;top:460.25999999999993px;width:991.3px;height:1px;background:#dae3ee;"></div>
<div class="t" style="left:5.1px;top:446.82px;height:12px;line-height:12px;font-size:8.4px;color:#3a3a3a;">+</div>
<svg class="b" style="left:16.5px;top:446.32px;" width="12.6" height="9.8" viewBox="0 0 12.6 9.8"><path d="M0.7 9.2V1.4Q0.7 0.6 1.5 0.6H4.4L5.5 1.8H10.4Q11.2 1.8 11.2 2.6V3.6" fill="#eaf3fc" stroke="#5b94c6" stroke-width="1"/><path d="M0.7 9.2L1.9 3.6H12L10.9 9.2Z" fill="#f6fafe" stroke="#5b94c6" stroke-width="1" stroke-linejoin="round"/></svg>
<svg class="b" style="left:34.900000000000006px;top:445.21999999999997px;" width="12.6" height="12.0" viewBox="0 0 12.6 12"><path d="M7.6 1.8H2.2Q0.6 1.8 0.6 3.4V9.8Q0.6 11.4 2.2 11.4H9.6Q11.2 11.4 11.2 9.8V5.4" fill="#f3f8fd" stroke="#6a9dd0" stroke-width="1"/><path d="M6.6 6.1L10.7 1.7" stroke="#2b2f72" stroke-width="2.3" stroke-linecap="round"/><path d="M4.9 8L5.4 5.5L7.4 7.4Z" fill="#2b2f72"/></svg>
<div class="t" style="left:57.2px;top:447.02px;height:12px;line-height:12px;font-size:7.4px;color:#222;transform:scaleX(1.0093);transform-origin:0 50%;">Test Interior job</div>
<div class="t" style="left:276.2px;top:443.62px;height:12px;line-height:12px;font-size:7.4px;color:#222;transform:scaleX(1.0037);transform-origin:0 50%;">Newly Added</div>
<div class="t" style="left:754.5px;top:443.62px;height:12px;line-height:12px;font-size:7.4px;color:#222;transform:scaleX(0.965);transform-origin:0 50%;">Dec 03 2021 05:00 PM</div>
<div class="t" style="left:843.7px;top:443.62px;height:12px;line-height:12px;font-size:7.4px;color:#222;transform:scaleX(0.9574);transform-origin:0 50%;">Joe Pettit</div>
<div class="b" style="left:1.5px;top:476.59999999999997px;width:991.3px;height:1px;background:#dae3ee;"></div>
<div class="t" style="left:5.1px;top:463.16px;height:12px;line-height:12px;font-size:8.4px;color:#3a3a3a;">+</div>
<svg class="b" style="left:16.5px;top:462.66px;" width="12.6" height="9.8" viewBox="0 0 12.6 9.8"><path d="M0.7 9.2V1.4Q0.7 0.6 1.5 0.6H4.4L5.5 1.8H10.4Q11.2 1.8 11.2 2.6V3.6" fill="#eaf3fc" stroke="#5b94c6" stroke-width="1"/><path d="M0.7 9.2L1.9 3.6H12L10.9 9.2Z" fill="#f6fafe" stroke="#5b94c6" stroke-width="1" stroke-linejoin="round"/></svg>
<svg class="b" style="left:34.900000000000006px;top:461.56px;" width="12.6" height="12.0" viewBox="0 0 12.6 12"><path d="M7.6 1.8H2.2Q0.6 1.8 0.6 3.4V9.8Q0.6 11.4 2.2 11.4H9.6Q11.2 11.4 11.2 9.8V5.4" fill="#f3f8fd" stroke="#6a9dd0" stroke-width="1"/><path d="M6.6 6.1L10.7 1.7" stroke="#2b2f72" stroke-width="2.3" stroke-linecap="round"/><path d="M4.9 8L5.4 5.5L7.4 7.4Z" fill="#2b2f72"/></svg>
<div class="t" style="left:57.2px;top:463.36px;height:12px;line-height:12px;font-size:7.4px;color:#222;transform:scaleX(1.0013);transform-origin:0 50%;">test job 10822</div>
<div class="t" style="left:276.2px;top:459.96px;height:12px;line-height:12px;font-size:7.4px;color:#222;transform:scaleX(1.0037);transform-origin:0 50%;">Newly Added</div>
<div class="t" style="left:754.5px;top:459.96px;height:12px;line-height:12px;font-size:7.4px;color:#222;transform:scaleX(0.965);transform-origin:0 50%;">May 29 2020 05:36 PM</div>
<div class="t" style="left:843.7px;top:459.96px;height:12px;line-height:12px;font-size:7.4px;color:#222;transform:scaleX(0.9574);transform-origin:0 50%;">Joe Pettit</div>
<div class="b" style="left:1.5px;top:492.94px;width:991.3px;height:1px;background:#dae3ee;"></div>
<div class="t" style="left:5.1px;top:479.50px;height:12px;line-height:12px;font-size:8.4px;color:#3a3a3a;">+</div>
<svg class="b" style="left:16.5px;top:479.00000000000006px;" width="12.6" height="9.8" viewBox="0 0 12.6 9.8"><path d="M0.7 9.2V1.4Q0.7 0.6 1.5 0.6H4.4L5.5 1.8H10.4Q11.2 1.8 11.2 2.6V3.6" fill="#eaf3fc" stroke="#5b94c6" stroke-width="1"/><path d="M0.7 9.2L1.9 3.6H12L10.9 9.2Z" fill="#f6fafe" stroke="#5b94c6" stroke-width="1" stroke-linejoin="round"/></svg>
<svg class="b" style="left:34.900000000000006px;top:477.90000000000003px;" width="12.6" height="12.0" viewBox="0 0 12.6 12"><path d="M7.6 1.8H2.2Q0.6 1.8 0.6 3.4V9.8Q0.6 11.4 2.2 11.4H9.6Q11.2 11.4 11.2 9.8V5.4" fill="#f3f8fd" stroke="#6a9dd0" stroke-width="1"/><path d="M6.6 6.1L10.7 1.7" stroke="#2b2f72" stroke-width="2.3" stroke-linecap="round"/><path d="M4.9 8L5.4 5.5L7.4 7.4Z" fill="#2b2f72"/></svg>
<div class="t" style="left:57.2px;top:479.70px;height:12px;line-height:12px;font-size:7.4px;color:#222;transform:scaleX(0.9702);transform-origin:0 50%;">Test Job Drawing</div>
<div class="t" style="left:276.2px;top:476.30px;height:12px;line-height:12px;font-size:7.4px;color:#222;transform:scaleX(1.0037);transform-origin:0 50%;">Newly Added</div>
<div class="t" style="left:754.5px;top:476.30px;height:12px;line-height:12px;font-size:7.4px;color:#222;transform:scaleX(0.965);transform-origin:0 50%;">Nov 18 2021 11:30 AM</div>
<div class="b" style="left:1.5px;top:509.28px;width:991.3px;height:1px;background:#dae3ee;"></div>
<div class="t" style="left:5.1px;top:495.84px;height:12px;line-height:12px;font-size:8.4px;color:#3a3a3a;">+</div>
<svg class="b" style="left:16.5px;top:495.34000000000003px;" width="12.6" height="9.8" viewBox="0 0 12.6 9.8"><path d="M0.7 9.2V1.4Q0.7 0.6 1.5 0.6H4.4L5.5 1.8H10.4Q11.2 1.8 11.2 2.6V3.6" fill="#eaf3fc" stroke="#5b94c6" stroke-width="1"/><path d="M0.7 9.2L1.9 3.6H12L10.9 9.2Z" fill="#f6fafe" stroke="#5b94c6" stroke-width="1" stroke-linejoin="round"/></svg>
<svg class="b" style="left:34.900000000000006px;top:494.24px;" width="12.6" height="12.0" viewBox="0 0 12.6 12"><path d="M7.6 1.8H2.2Q0.6 1.8 0.6 3.4V9.8Q0.6 11.4 2.2 11.4H9.6Q11.2 11.4 11.2 9.8V5.4" fill="#f3f8fd" stroke="#6a9dd0" stroke-width="1"/><path d="M6.6 6.1L10.7 1.7" stroke="#2b2f72" stroke-width="2.3" stroke-linecap="round"/><path d="M4.9 8L5.4 5.5L7.4 7.4Z" fill="#2b2f72"/></svg>
<div class="t" style="left:57.2px;top:496.04px;height:12px;line-height:12px;font-size:7.4px;color:#222;transform:scaleX(1.0103);transform-origin:0 50%;">test job w co</div>
<div class="t" style="left:276.2px;top:492.64px;height:12px;line-height:12px;font-size:7.4px;color:#222;transform:scaleX(1.0037);transform-origin:0 50%;">Newly Added</div>
<div class="t" style="left:754.5px;top:492.64px;height:12px;line-height:12px;font-size:7.4px;color:#222;transform:scaleX(0.965);transform-origin:0 50%;">Dec 21 2020 04:59 PM</div>
<div class="t" style="left:843.7px;top:492.64px;height:12px;line-height:12px;font-size:7.4px;color:#222;transform:scaleX(0.9574);transform-origin:0 50%;">Joe Pettit</div>
<div class="b" style="left:14.2px;top:181px;width:978.5999999999999px;height:130.8px;background:#7f7f7f;border-left:1.1px solid #474b80;border-bottom:1.3px solid #2f357a;border-top:1px solid #4e5062;border-radius:3px 0 0 2px;"></div>
<div class="t" style="left:22.4px;top:187.80px;height:12px;line-height:12px;font-size:7.4px;color:#fff;font-weight:bold;transform:scaleX(0.9224);transform-origin:0 50%;">Scenarios</div>
<div class="b" style="left:58px;top:187.6px;width:49px;height:11.3px;background:#c7c8d0;border:1px solid #b9bac6;border-radius:2px;"></div>
<div class="t" style="left:61.6px;top:187.40px;height:12px;line-height:12px;font-size:6.4px;color:#aeb0c0;font-weight:bold;transform:scaleX(0.9247);transform-origin:0 50%;">CHECK-IN ALL</div>
<div class="b" style="left:20.8px;top:203.8px;width:972.0px;height:103.4px;background:#fff;"></div>
<div class="b" style="left:20.8px;top:203.8px;width:972.0px;height:13.8px;background:#061d96;"></div>
<div class="b" style="left:37.3px;top:203.8px;width:1px;height:13.8px;background:#1f32a0;"></div>
<div class="b" style="left:54.2px;top:203.8px;width:1px;height:13.8px;background:#1f32a0;"></div>
<div class="b" style="left:70px;top:203.8px;width:1px;height:13.8px;background:#1f32a0;"></div>
<div class="b" style="left:95.2px;top:203.8px;width:1px;height:13.8px;background:#1f32a0;"></div>
<div class="b" style="left:316.2px;top:203.8px;width:1px;height:13.8px;background:#1f32a0;"></div>
<div class="b" style="left:372.8px;top:203.8px;width:1px;height:13.8px;background:#1f32a0;"></div>
<div class="b" style="left:427.6px;top:203.8px;width:1px;height:13.8px;background:#1f32a0;"></div>
<div class="b" style="left:491.6px;top:203.8px;width:1px;height:13.8px;background:#1f32a0;"></div>
<div class="b" style="left:574.6px;top:203.8px;width:1px;height:13.8px;background:#1f32a0;"></div>
<div class="b" style="left:652.2px;top:203.8px;width:1px;height:13.8px;background:#1f32a0;"></div>
<div class="b" style="left:669.7px;top:203.8px;width:1px;height:13.8px;background:#1f32a0;"></div>
<div class="b" style="left:687.2px;top:203.8px;width:1px;height:13.8px;background:#1f32a0;"></div>
<div class="b" style="left:704.8px;top:203.8px;width:1px;height:13.8px;background:#1f32a0;"></div>
<div class="b" style="left:725.8px;top:203.8px;width:1px;height:13.8px;background:#1f32a0;"></div>
<div class="b" style="left:910.5px;top:203.8px;width:1px;height:13.8px;background:#1f32a0;"></div>
<div class="b" style="left:927.7px;top:203.8px;width:1px;height:13.8px;background:#1f32a0;"></div>
<div class="b" style="left:945.6px;top:203.8px;width:1px;height:13.8px;background:#1f32a0;"></div>
<div class="b" style="left:962.8px;top:203.8px;width:1px;height:13.8px;background:#1f32a0;"></div>
<div class="b" style="left:980.7px;top:203.8px;width:1px;height:13.8px;background:#1f32a0;"></div>
<div class="t" style="left:71.8px;top:204.60px;height:12px;line-height:12px;font-size:7.4px;color:#fff;transform:scaleX(0.9163);transform-origin:0 50%;-webkit-text-stroke:0.2px #fff;">Status</div>
<div class="t" style="left:98.2px;top:204.60px;height:12px;line-height:12px;font-size:7.4px;color:#fff;transform:scaleX(0.9936);transform-origin:0 50%;-webkit-text-stroke:0.2px #fff;">Title</div>
<div class="t" style="left:319.2px;top:204.60px;height:12px;line-height:12px;font-size:7.4px;color:#fff;transform:scaleX(0.9664);transform-origin:0 50%;-webkit-text-stroke:0.2px #fff;">Net Cost</div>
<div class="t" style="left:375.7px;top:204.60px;height:12px;line-height:12px;font-size:7.4px;color:#fff;transform:scaleX(0.9195);transform-origin:0 50%;-webkit-text-stroke:0.2px #fff;">Gross Price</div>
<div class="t" style="left:430px;top:204.60px;height:12px;line-height:12px;font-size:7.4px;color:#fff;transform:scaleX(0.9616);transform-origin:0 50%;-webkit-text-stroke:0.2px #fff;">Selling Price</div>
<div class="t" style="left:494.2px;top:204.60px;height:12px;line-height:12px;font-size:7.4px;color:#fff;transform:scaleX(0.9271);transform-origin:0 50%;-webkit-text-stroke:0.2px #fff;">Locked By</div>
<div class="t" style="left:577.5px;top:204.60px;height:12px;line-height:12px;font-size:7.4px;color:#fff;transform:scaleX(0.965);transform-origin:0 50%;-webkit-text-stroke:0.2px #fff;">Locked On</div>
<div class="t" style="left:728.7px;top:204.60px;height:12px;line-height:12px;font-size:7.4px;color:#fff;transform:scaleX(0.9995);transform-origin:0 50%;-webkit-text-stroke:0.2px #fff;">Collaboration Tools</div>
<svg class="b" style="left:308px;top:207.29999999999998px;" width="4" height="5" viewBox="0 0 4 5"><path d="M0 0H4L2.6 1.8V5H1.4V1.8Z" fill="#7585d6"/></svg>
<svg class="b" style="left:365px;top:207.29999999999998px;" width="4" height="5" viewBox="0 0 4 5"><path d="M0 0H4L2.6 1.8V5H1.4V1.8Z" fill="#7585d6"/></svg>
<svg class="b" style="left:419.7px;top:207.29999999999998px;" width="4" height="5" viewBox="0 0 4 5"><path d="M0 0H4L2.6 1.8V5H1.4V1.8Z" fill="#7585d6"/></svg>
<svg class="b" style="left:483.7px;top:207.29999999999998px;" width="4" height="5" viewBox="0 0 4 5"><path d="M0 0H4L2.6 1.8V5H1.4V1.8Z" fill="#7585d6"/></svg>
<svg class="b" style="left:566.7px;top:207.29999999999998px;" width="4" height="5" viewBox="0 0 4 5"><path d="M0 0H4L2.6 1.8V5H1.4V1.8Z" fill="#7585d6"/></svg>
<svg class="b" style="left:643.7px;top:207.29999999999998px;" width="4" height="5" viewBox="0 0 4 5"><path d="M0 0H4L2.6 1.8V5H1.4V1.8Z" fill="#7585d6"/></svg>
<div class="b" style="left:20.8px;top:217.5px;width:972.0px;height:20px;background:#eff5fc;"></div>
<div class="b" style="left:20.8px;top:237.0px;width:972.0px;height:1px;background:#dbe5f0;"></div>
<svg class="b" style="left:22.9px;top:222.2px;" width="13" height="11.8" viewBox="0 0 13 11.8"><rect x="0.6" y="0.6" width="11.8" height="8.8" rx="1.3" fill="#a9c8ea" stroke="#5b93cf" stroke-width="1.1"/><rect x="2.7" y="2.3" width="7.6" height="5.4" rx="1" fill="#cfe0f5" stroke="#6fa0d6" stroke-width="0.6"/><circle cx="6.2" cy="5.1" r="1.8" fill="#8fa8d8" stroke="#27307a" stroke-width="0.9"/><path d="M6.4 5L8.8 2.9" stroke="#27307a" stroke-width="1"/><path d="M4 9.6H9L9.8 11.4H3.2Z" fill="#8db4df"/></svg>
<svg class="b" style="left:40.300000000000004px;top:223.0px;" width="12.6" height="9.8" viewBox="0 0 12.6 9.8"><path d="M0.7 9.2V1.4Q0.7 0.6 1.5 0.6H4.4L5.5 1.8H10.4Q11.2 1.8 11.2 2.6V3.6" fill="#eaf3fc" stroke="#5b94c6" stroke-width="1"/><path d="M0.7 9.2L1.9 3.6H12L10.9 9.2Z" fill="#f6fafe" stroke="#5b94c6" stroke-width="1" stroke-linejoin="round"/></svg>
<svg class="b" style="left:79.2px;top:223.5px;" width="8" height="8" viewBox="0 0 8 8"><circle cx="4" cy="4" r="3.2" fill="#d9231f" stroke="#d9231f" stroke-opacity="0.55" stroke-width="0.6"/></svg>
<div class="t" style="left:102.5px;top:221.50px;height:12px;line-height:12px;font-size:7.4px;color:#222;transform:scaleX(0.9124);transform-origin:0 50%;">Base Bid</div>
<div class="t" style="left:320px;top:221.50px;height:12px;line-height:12px;font-size:7.2px;color:#222;transform:scaleX(0.9579);transform-origin:0 50%;">$320,317.62</div>
<div class="t" style="left:376.7px;top:221.50px;height:12px;line-height:12px;font-size:7.2px;color:#222;transform:scaleX(0.9579);transform-origin:0 50%;">$455,983.27</div>
<div class="t" style="left:431.7px;top:221.50px;height:12px;line-height:12px;font-size:7.2px;color:#222;transform:scaleX(0.9579);transform-origin:0 50%;">$497,090.16</div>
<svg class="b" style="left:655.6999999999999px;top:221.4px;" width="13.2" height="13.2" viewBox="0 0 13.2 13.2"><circle cx="6.6" cy="6.6" r="5.85" fill="#f1f7fc" stroke="#4f86b6" stroke-width="1.2"/><text x="6.6" y="9.5" text-anchor="middle" font-family='"Liberation Sans", sans-serif' font-size="8.4" font-weight="bold" fill="#1b2a86">$</text></svg>
<svg class="b" style="left:673.0px;top:221.4px;" width="13.2" height="13.2" viewBox="0 0 13.2 13.2"><circle cx="6.6" cy="6.6" r="5.85" fill="#f6fafe" stroke="#4a7aa8" stroke-width="1.2"/><path d="M6.7 2.6V6.8H10.6" fill="none" stroke="#26285e" stroke-width="1.4"/></svg>
<svg class="b" style="left:690.9000000000001px;top:221.7px;" width="12.6" height="12.6" viewBox="0 0 12.6 12.6"><rect x="0.6" y="0.6" width="11.4" height="11.4" rx="1.6" fill="#e8f0fb" stroke="#4f86b8" stroke-width="1.2"/><path d="M3 6.2L5.3 8.2L9.5 3.6" fill="none" stroke="#22265e" stroke-width="1.6"/></svg>
<svg class="b" style="left:710.5px;top:221.7px;" width="12.6" height="12.6" viewBox="0 0 12.6 12.6"><path d="M0.6 1.4Q0.6 0.6 1.4 0.6H9.4L12 3.2V11.2Q12 12 11.2 12H1.4Q0.6 12 0.6 11.2Z" fill="#f3f6fa" stroke="#c3cedd" stroke-width="1"/><rect x="3" y="0.8" width="5.6" height="3.6" fill="none" stroke="#c3cedd" stroke-width="0.9"/><rect x="2.6" y="7" width="7.4" height="5" fill="none" stroke="#c3cedd" stroke-width="0.9"/></svg>
<div class="b" style="left:731.6px;top:221.4px;width:44.8px;height:13.2px;background:#fff;border:1.1px solid #55575f;border-radius:3px;"></div>
<div class="t" style="left:737px;top:222.20px;height:12px;line-height:12px;font-size:6.5px;color:#1b2a70;font-weight:bold;transform:scaleX(0.8872);transform-origin:0 50%;">CHECK-OUT</div>
<div class="b" style="left:779px;top:221.4px;width:44.4px;height:13.2px;background:#fbfbfd;border:1px solid #cdd0db;border-radius:3px;"></div>
<div class="t" style="left:786.6px;top:222.20px;height:12px;line-height:12px;font-size:6.5px;color:#c6cad8;font-weight:bold;transform:scaleX(0.9251);transform-origin:0 50%;">CHECK-IN</div>
<svg class="b" style="left:826.5px;top:222.0px;" width="13.4" height="12" viewBox="0 0 13.4 12"><path d="M8.9 2.5A4.75 4.75 0 1 0 10.1 8.2" fill="none" stroke="#41709a" stroke-width="1.05"/><path d="M4.2 4.5L7.4 7.7M7.4 4.5L4.2 7.7" stroke="#27406a" stroke-width="1.15"/><path d="M9 6.7H11.8" stroke="#35608c" stroke-width="1"/><path d="M11 5.2L13.2 6.9L10.8 8.3Z" fill="#35608c"/></svg>
<svg class="b" style="left:913.448px;top:221.56px;" width="13.104" height="12.48" viewBox="0 0 12.6 12"><path d="M7.6 1.8H2.2Q0.6 1.8 0.6 3.4V9.8Q0.6 11.4 2.2 11.4H9.6Q11.2 11.4 11.2 9.8V5.4" fill="#f3f8fd" stroke="#6a9dd0" stroke-width="1"/><path d="M6.6 6.1L10.7 1.7" stroke="#2b2f72" stroke-width="2.3" stroke-linecap="round"/><path d="M4.9 8L5.4 5.5L7.4 7.4Z" fill="#2b2f72"/></svg>
<svg class="b" style="left:931.5999999999999px;top:221.7px;" width="11.4" height="12.6" viewBox="0 0 11.4 12.6"><path d="M0.7 1.6Q0.7 0.6 1.7 0.6H5.8L9.5 4.2V10.6Q9.5 11.6 8.5 11.6H1.7Q0.7 11.6 0.7 10.6Z" fill="#f4f8fd" stroke="#5587b4" stroke-width="1.2"/><path d="M5.8 1V4H9" fill="none" stroke="#8fb2d2" stroke-width="0.6"/><circle cx="8.2" cy="9.9" r="2.85" fill="#43537f" stroke="#f4f8fd" stroke-width="0.5"/><path d="M6.8 9.9H9.6" stroke="#e8eefa" stroke-width="1"/></svg>
<svg class="b" style="left:949.5px;top:221.79999999999998px;" width="11" height="12.8" viewBox="0 0 11 12.8"><path d="M0.4 3.3Q0.6 1.9 3.2 1.5Q3.6 0.3 5.5 0.3Q7.4 0.3 7.8 1.5Q10.4 1.9 10.6 3.3Z" fill="#7eb1df"/><path d="M1.4 3.4V11Q1.4 12.2 2.6 12.2H8.4Q9.6 12.2 9.6 11V3.4" fill="#b4d2ef" stroke="#5d9ad2" stroke-width="1.1"/><path d="M3.9 4.8V10.6M5.5 4.8V10.6M7.1 4.8V10.6" stroke="#5d9ad2" stroke-width="0.85"/></svg>
<svg class="b" style="left:965.5px;top:222.8px;" width="13" height="10" viewBox="0 0 13 10"><path d="M0.6 5H12M7.6 0.8L12 5L7.6 9.2" fill="none" stroke="#3585cf" stroke-width="1.15" stroke-linecap="round" stroke-linejoin="round"/></svg>
<div class="b" style="left:20.8px;top:237.5px;width:972.0px;height:20px;background:#eaeaea;"></div>
<div class="b" style="left:20.8px;top:257.0px;width:972.0px;height:1px;background:#dbe5f0;"></div>
<svg class="b" style="left:22.9px;top:242.2px;" width="13" height="11.8" viewBox="0 0 13 11.8"><rect x="0.6" y="0.6" width="11.8" height="8.8" rx="1.3" fill="#a9c8ea" stroke="#5b93cf" stroke-width="1.1"/><rect x="2.7" y="2.3" width="7.6" height="5.4" rx="1" fill="#cfe0f5" stroke="#6fa0d6" stroke-width="0.6"/><circle cx="6.2" cy="5.1" r="1.8" fill="#8fa8d8" stroke="#27307a" stroke-width="0.9"/><path d="M6.4 5L8.8 2.9" stroke="#27307a" stroke-width="1"/><path d="M4 9.6H9L9.8 11.4H3.2Z" fill="#8db4df"/></svg>
<svg class="b" style="left:40.300000000000004px;top:243.0px;" width="12.6" height="9.8" viewBox="0 0 12.6 9.8"><path d="M0.7 9.2V1.4Q0.7 0.6 1.5 0.6H4.4L5.5 1.8H10.4Q11.2 1.8 11.2 2.6V3.6" fill="#eaf3fc" stroke="#5b94c6" stroke-width="1"/><path d="M0.7 9.2L1.9 3.6H12L10.9 9.2Z" fill="#f6fafe" stroke="#5b94c6" stroke-width="1" stroke-linejoin="round"/></svg>
<svg class="b" style="left:79.2px;top:243.5px;" width="8" height="8" viewBox="0 0 8 8"><circle cx="4" cy="4" r="3.2" fill="#27b024" stroke="#27b024" stroke-opacity="0.55" stroke-width="0.6"/></svg>
<div class="t" style="left:102.5px;top:241.50px;height:12px;line-height:12px;font-size:7.4px;color:#222;transform:scaleX(0.9608);transform-origin:0 50%;">Change Order Scenario</div>
<div class="t" style="left:320px;top:241.50px;height:12px;line-height:12px;font-size:7.2px;color:#222;transform:scaleX(0.9579);transform-origin:0 50%;">$308,956.70</div>
<div class="t" style="left:376.7px;top:241.50px;height:12px;line-height:12px;font-size:7.2px;color:#222;transform:scaleX(0.9579);transform-origin:0 50%;">$510,964.79</div>
<div class="t" style="left:431.7px;top:241.50px;height:12px;line-height:12px;font-size:7.2px;color:#222;transform:scaleX(0.9579);transform-origin:0 50%;">$557,540.02</div>
<svg class="b" style="left:655.6999999999999px;top:241.4px;" width="13.2" height="13.2" viewBox="0 0 13.2 13.2"><circle cx="6.6" cy="6.6" r="5.85" fill="#f1f7fc" stroke="#4f86b6" stroke-width="1.2"/><text x="6.6" y="9.5" text-anchor="middle" font-family='"Liberation Sans", sans-serif' font-size="8.4" font-weight="bold" fill="#1b2a86">$</text></svg>
<svg class="b" style="left:673.0px;top:241.4px;" width="13.2" height="13.2" viewBox="0 0 13.2 13.2"><circle cx="6.6" cy="6.6" r="5.85" fill="#f6fafe" stroke="#4a7aa8" stroke-width="1.2"/><path d="M6.7 2.6V6.8H10.6" fill="none" stroke="#26285e" stroke-width="1.4"/></svg>
<svg class="b" style="left:690.9000000000001px;top:241.7px;" width="12.6" height="12.6" viewBox="0 0 12.6 12.6"><rect x="0.6" y="0.6" width="11.4" height="11.4" rx="1.6" fill="#e8f0fb" stroke="#4f86b8" stroke-width="1.2"/><path d="M3 6.2L5.3 8.2L9.5 3.6" fill="none" stroke="#22265e" stroke-width="1.6"/></svg>
<svg class="b" style="left:710.5px;top:241.7px;" width="12.6" height="12.6" viewBox="0 0 12.6 12.6"><path d="M0.6 1.4Q0.6 0.6 1.4 0.6H9.4L12 3.2V11.2Q12 12 11.2 12H1.4Q0.6 12 0.6 11.2Z" fill="#f3f6fa" stroke="#c3cedd" stroke-width="1"/><rect x="3" y="0.8" width="5.6" height="3.6" fill="none" stroke="#c3cedd" stroke-width="0.9"/><rect x="2.6" y="7" width="7.4" height="5" fill="none" stroke="#c3cedd" stroke-width="0.9"/></svg>
<div class="b" style="left:735px;top:241.0px;width:58px;height:13.6px;background:#e9eaf3;border:1.1px solid #4a558f;border-radius:3px;"></div>
<div class="t" style="left:738px;top:242.00px;height:12px;line-height:12px;font-size:6.5px;color:#1b2a70;font-weight:bold;transform:scaleX(0.8997);transform-origin:0 50%;">CHANGE ORDERS</div>
<svg class="b" style="left:913.448px;top:241.41px;" width="13.104" height="12.48" viewBox="0 0 12.6 12"><path d="M7.6 1.8H2.2Q0.6 1.8 0.6 3.4V9.8Q0.6 11.4 2.2 11.4H9.6Q11.2 11.4 11.2 9.8V5.4" fill="#f3f8fd" stroke="#6a9dd0" stroke-width="1"/><path d="M6.6 6.1L10.7 1.7" stroke="#2b2f72" stroke-width="2.3" stroke-linecap="round"/><path d="M4.9 8L5.4 5.5L7.4 7.4Z" fill="#2b2f72"/></svg>
<svg class="b" style="left:931.5999999999999px;top:241.54999999999998px;" width="11.4" height="12.6" viewBox="0 0 11.4 12.6"><path d="M0.7 1.6Q0.7 0.6 1.7 0.6H5.8L9.5 4.2V10.6Q9.5 11.6 8.5 11.6H1.7Q0.7 11.6 0.7 10.6Z" fill="#f4f8fd" stroke="#5587b4" stroke-width="1.2"/><path d="M5.8 1V4H9" fill="none" stroke="#8fb2d2" stroke-width="0.6"/><circle cx="8.2" cy="9.9" r="2.85" fill="#43537f" stroke="#f4f8fd" stroke-width="0.5"/><path d="M6.8 9.9H9.6" stroke="#e8eefa" stroke-width="1"/></svg>
<svg class="b" style="left:949.5px;top:241.64999999999998px;" width="11" height="12.8" viewBox="0 0 11 12.8"><path d="M0.4 3.3Q0.6 1.9 3.2 1.5Q3.6 0.3 5.5 0.3Q7.4 0.3 7.8 1.5Q10.4 1.9 10.6 3.3Z" fill="#7eb1df"/><path d="M1.4 3.4V11Q1.4 12.2 2.6 12.2H8.4Q9.6 12.2 9.6 11V3.4" fill="#b4d2ef" stroke="#5d9ad2" stroke-width="1.1"/><path d="M3.9 4.8V10.6M5.5 4.8V10.6M7.1 4.8V10.6" stroke="#5d9ad2" stroke-width="0.85"/></svg>
<svg class="b" style="left:965.5px;top:242.65px;" width="13" height="10" viewBox="0 0 13 10"><path d="M0.6 5H12M7.6 0.8L12 5L7.6 9.2" fill="none" stroke="#3585cf" stroke-width="1.15" stroke-linecap="round" stroke-linejoin="round"/></svg>
<div class="b" style="left:20.8px;top:257.5px;width:972.0px;height:20px;background:#fff;"></div>
<div class="b" style="left:20.8px;top:277.0px;width:972.0px;height:1px;background:#dbe5f0;"></div>
<svg class="b" style="left:22.9px;top:262.20000000000005px;" width="13" height="11.8" viewBox="0 0 13 11.8"><rect x="0.6" y="0.6" width="11.8" height="8.8" rx="1.3" fill="#a9c8ea" stroke="#5b93cf" stroke-width="1.1"/><rect x="2.7" y="2.3" width="7.6" height="5.4" rx="1" fill="#cfe0f5" stroke="#6fa0d6" stroke-width="0.6"/><circle cx="6.2" cy="5.1" r="1.8" fill="#8fa8d8" stroke="#27307a" stroke-width="0.9"/><path d="M6.4 5L8.8 2.9" stroke="#27307a" stroke-width="1"/><path d="M4 9.6H9L9.8 11.4H3.2Z" fill="#8db4df"/></svg>
<svg class="b" style="left:40.300000000000004px;top:263.0px;" width="12.6" height="9.8" viewBox="0 0 12.6 9.8"><path d="M0.7 9.2V1.4Q0.7 0.6 1.5 0.6H4.4L5.5 1.8H10.4Q11.2 1.8 11.2 2.6V3.6" fill="#eaf3fc" stroke="#5b94c6" stroke-width="1"/><path d="M0.7 9.2L1.9 3.6H12L10.9 9.2Z" fill="#f6fafe" stroke="#5b94c6" stroke-width="1" stroke-linejoin="round"/></svg>
<svg class="b" style="left:79.2px;top:263.5px;" width="8" height="8" viewBox="0 0 8 8"><circle cx="4" cy="4" r="3.2" fill="#d9231f" stroke="#d9231f" stroke-opacity="0.55" stroke-width="0.6"/></svg>
<div class="t" style="left:102.5px;top:261.50px;height:12px;line-height:12px;font-size:7.4px;color:#222;transform:scaleX(0.9425);transform-origin:0 50%;">Troy's Test Scenario</div>
<div class="t" style="left:320px;top:261.50px;height:12px;line-height:12px;font-size:7.2px;color:#222;transform:scaleX(0.9579);transform-origin:0 50%;">$594,433.69</div>
<div class="t" style="left:376.7px;top:261.50px;height:12px;line-height:12px;font-size:7.2px;color:#222;transform:scaleX(0.9579);transform-origin:0 50%;">$968,608.40</div>
<div class="t" style="left:431.7px;top:261.50px;height:12px;line-height:12px;font-size:7.2px;color:#222;transform:scaleX(0.9572);transform-origin:0 50%;">$1,057,381.36</div>
<svg class="b" style="left:655.6999999999999px;top:261.4px;" width="13.2" height="13.2" viewBox="0 0 13.2 13.2"><circle cx="6.6" cy="6.6" r="5.85" fill="#f1f7fc" stroke="#4f86b6" stroke-width="1.2"/><text x="6.6" y="9.5" text-anchor="middle" font-family='"Liberation Sans", sans-serif' font-size="8.4" font-weight="bold" fill="#1b2a86">$</text></svg>
<svg class="b" style="left:673.0px;top:261.4px;" width="13.2" height="13.2" viewBox="0 0 13.2 13.2"><circle cx="6.6" cy="6.6" r="5.85" fill="#f6fafe" stroke="#4a7aa8" stroke-width="1.2"/><path d="M6.7 2.6V6.8H10.6" fill="none" stroke="#26285e" stroke-width="1.4"/></svg>
<svg class="b" style="left:690.9000000000001px;top:261.7px;" width="12.6" height="12.6" viewBox="0 0 12.6 12.6"><rect x="0.6" y="0.6" width="11.4" height="11.4" rx="1.6" fill="#e8f0fb" stroke="#4f86b8" stroke-width="1.2"/><path d="M3 6.2L5.3 8.2L9.5 3.6" fill="none" stroke="#22265e" stroke-width="1.6"/></svg>
<svg class="b" style="left:710.5px;top:261.7px;" width="12.6" height="12.6" viewBox="0 0 12.6 12.6"><path d="M0.6 1.4Q0.6 0.6 1.4 0.6H9.4L12 3.2V11.2Q12 12 11.2 12H1.4Q0.6 12 0.6 11.2Z" fill="#f3f6fa" stroke="#c3cedd" stroke-width="1"/><rect x="3" y="0.8" width="5.6" height="3.6" fill="none" stroke="#c3cedd" stroke-width="0.9"/><rect x="2.6" y="7" width="7.4" height="5" fill="none" stroke="#c3cedd" stroke-width="0.9"/></svg>
<div class="b" style="left:731.6px;top:261.4px;width:44.8px;height:13.2px;background:#fff;border:1.1px solid #55575f;border-radius:3px;"></div>
<div class="t" style="left:737px;top:262.20px;height:12px;line-height:12px;font-size:6.5px;color:#1b2a70;font-weight:bold;transform:scaleX(0.8872);transform-origin:0 50%;">CHECK-OUT</div>
<div class="b" style="left:779px;top:261.4px;width:44.4px;height:13.2px;background:#fbfbfd;border:1px solid #cdd0db;border-radius:3px;"></div>
<div class="t" style="left:786.6px;top:262.20px;height:12px;line-height:12px;font-size:6.5px;color:#c6cad8;font-weight:bold;transform:scaleX(0.9251);transform-origin:0 50%;">CHECK-IN</div>
<svg class="b" style="left:826.5px;top:262.0px;" width="13.4" height="12" viewBox="0 0 13.4 12"><path d="M8.9 2.5A4.75 4.75 0 1 0 10.1 8.2" fill="none" stroke="#41709a" stroke-width="1.05"/><path d="M4.2 4.5L7.4 7.7M7.4 4.5L4.2 7.7" stroke="#27406a" stroke-width="1.15"/><path d="M9 6.7H11.8" stroke="#35608c" stroke-width="1"/><path d="M11 5.2L13.2 6.9L10.8 8.3Z" fill="#35608c"/></svg>
<svg class="b" style="left:913.448px;top:261.26px;" width="13.104" height="12.48" viewBox="0 0 12.6 12"><path d="M7.6 1.8H2.2Q0.6 1.8 0.6 3.4V9.8Q0.6 11.4 2.2 11.4H9.6Q11.2 11.4 11.2 9.8V5.4" fill="#f3f8fd" stroke="#6a9dd0" stroke-width="1"/><path d="M6.6 6.1L10.7 1.7" stroke="#2b2f72" stroke-width="2.3" stroke-linecap="round"/><path d="M4.9 8L5.4 5.5L7.4 7.4Z" fill="#2b2f72"/></svg>
<svg class="b" style="left:931.5999999999999px;top:261.4px;" width="11.4" height="12.6" viewBox="0 0 11.4 12.6"><path d="M0.7 1.6Q0.7 0.6 1.7 0.6H5.8L9.5 4.2V10.6Q9.5 11.6 8.5 11.6H1.7Q0.7 11.6 0.7 10.6Z" fill="#f4f8fd" stroke="#5587b4" stroke-width="1.2"/><path d="M5.8 1V4H9" fill="none" stroke="#8fb2d2" stroke-width="0.6"/><circle cx="8.2" cy="9.9" r="2.85" fill="#43537f" stroke="#f4f8fd" stroke-width="0.5"/><path d="M6.8 9.9H9.6" stroke="#e8eefa" stroke-width="1"/></svg>
<svg class="b" style="left:949.5px;top:261.5px;" width="11" height="12.8" viewBox="0 0 11 12.8"><path d="M0.4 3.3Q0.6 1.9 3.2 1.5Q3.6 0.3 5.5 0.3Q7.4 0.3 7.8 1.5Q10.4 1.9 10.6 3.3Z" fill="#7eb1df"/><path d="M1.4 3.4V11Q1.4 12.2 2.6 12.2H8.4Q9.6 12.2 9.6 11V3.4" fill="#b4d2ef" stroke="#5d9ad2" stroke-width="1.1"/><path d="M3.9 4.8V10.6M5.5 4.8V10.6M7.1 4.8V10.6" stroke="#5d9ad2" stroke-width="0.85"/></svg>
<svg class="b" style="left:965.5px;top:262.5px;" width="13" height="10" viewBox="0 0 13 10"><path d="M0.6 5H12M7.6 0.8L12 5L7.6 9.2" fill="none" stroke="#3585cf" stroke-width="1.15" stroke-linecap="round" stroke-linejoin="round"/></svg>
<div class="t" style="left:777px;top:262.30px;height:12px;line-height:12px;font-size:6.4px;color:#c9ccd8;font-weight:bold;transform:scaleX(0.9857);transform-origin:0 50%;opacity:.45;">CHANGE ORDERS</div>
<div class="b" style="left:20.8px;top:277.5px;width:972.0px;height:20px;background:#fff;"></div>
<div class="b" style="left:20.8px;top:297.0px;width:972.0px;height:1px;background:#dbe5f0;"></div>
<svg class="b" style="left:22.9px;top:282.20000000000005px;" width="13" height="11.8" viewBox="0 0 13 11.8"><rect x="0.6" y="0.6" width="11.8" height="8.8" rx="1.3" fill="#a9c8ea" stroke="#5b93cf" stroke-width="1.1"/><rect x="2.7" y="2.3" width="7.6" height="5.4" rx="1" fill="#cfe0f5" stroke="#6fa0d6" stroke-width="0.6"/><circle cx="6.2" cy="5.1" r="1.8" fill="#8fa8d8" stroke="#27307a" stroke-width="0.9"/><path d="M6.4 5L8.8 2.9" stroke="#27307a" stroke-width="1"/><path d="M4 9.6H9L9.8 11.4H3.2Z" fill="#8db4df"/></svg>
<svg class="b" style="left:40.300000000000004px;top:283.0px;" width="12.6" height="9.8" viewBox="0 0 12.6 9.8"><path d="M0.7 9.2V1.4Q0.7 0.6 1.5 0.6H4.4L5.5 1.8H10.4Q11.2 1.8 11.2 2.6V3.6" fill="#eaf3fc" stroke="#5b94c6" stroke-width="1"/><path d="M0.7 9.2L1.9 3.6H12L10.9 9.2Z" fill="#f6fafe" stroke="#5b94c6" stroke-width="1" stroke-linejoin="round"/></svg>
<svg class="b" style="left:79.2px;top:283.5px;" width="8" height="8" viewBox="0 0 8 8"><circle cx="4" cy="4" r="3.2" fill="#27b024" stroke="#27b024" stroke-opacity="0.55" stroke-width="0.6"/></svg>
<div class="t" style="left:102.5px;top:281.50px;height:12px;line-height:12px;font-size:7.4px;color:#222;transform:scaleX(0.9259);transform-origin:0 50%;">Zones - COPY</div>
<div class="t" style="left:320px;top:281.50px;height:12px;line-height:12px;font-size:7.2px;color:#222;transform:scaleX(0.9587);transform-origin:0 50%;">$68,679.57</div>
<div class="t" style="left:376.7px;top:281.50px;height:12px;line-height:12px;font-size:7.2px;color:#222;transform:scaleX(0.9587);transform-origin:0 50%;">$97,014.75</div>
<div class="t" style="left:431.7px;top:281.50px;height:12px;line-height:12px;font-size:7.2px;color:#222;transform:scaleX(0.9579);transform-origin:0 50%;">$104,775.93</div>
<svg class="b" style="left:655.6999999999999px;top:281.4px;" width="13.2" height="13.2" viewBox="0 0 13.2 13.2"><circle cx="6.6" cy="6.6" r="5.85" fill="#f1f7fc" stroke="#4f86b6" stroke-width="1.2"/><text x="6.6" y="9.5" text-anchor="middle" font-family='"Liberation Sans", sans-serif' font-size="8.4" font-weight="bold" fill="#1b2a86">$</text></svg>
<svg class="b" style="left:673.0px;top:281.4px;" width="13.2" height="13.2" viewBox="0 0 13.2 13.2"><circle cx="6.6" cy="6.6" r="5.85" fill="#f6fafe" stroke="#4a7aa8" stroke-width="1.2"/><path d="M6.7 2.6V6.8H10.6" fill="none" stroke="#26285e" stroke-width="1.4"/></svg>
<svg class="b" style="left:690.9000000000001px;top:281.7px;" width="12.6" height="12.6" viewBox="0 0 12.6 12.6"><rect x="0.6" y="0.6" width="11.4" height="11.4" rx="1.6" fill="#e8f0fb" stroke="#4f86b8" stroke-width="1.2"/><path d="M3 6.2L5.3 8.2L9.5 3.6" fill="none" stroke="#22265e" stroke-width="1.6"/></svg>
<svg class="b" style="left:710.5px;top:281.7px;" width="12.6" height="12.6" viewBox="0 0 12.6 12.6"><path d="M0.6 1.4Q0.6 0.6 1.4 0.6H9.4L12 3.2V11.2Q12 12 11.2 12H1.4Q0.6 12 0.6 11.2Z" fill="#f3f6fa" stroke="#c3cedd" stroke-width="1"/><rect x="3" y="0.8" width="5.6" height="3.6" fill="none" stroke="#c3cedd" stroke-width="0.9"/><rect x="2.6" y="7" width="7.4" height="5" fill="none" stroke="#c3cedd" stroke-width="0.9"/></svg>
<div class="b" style="left:731.6px;top:281.4px;width:44.8px;height:13.2px;background:#fff;border:1.1px solid #55575f;border-radius:3px;"></div>
<div class="t" style="left:737px;top:282.20px;height:12px;line-height:12px;font-size:6.5px;color:#1b2a70;font-weight:bold;transform:scaleX(0.8872);transform-origin:0 50%;">CHECK-OUT</div>
<div class="b" style="left:779px;top:281.4px;width:44.4px;height:13.2px;background:#fbfbfd;border:1px solid #cdd0db;border-radius:3px;"></div>
<div class="t" style="left:786.6px;top:282.20px;height:12px;line-height:12px;font-size:6.5px;color:#c6cad8;font-weight:bold;transform:scaleX(0.9251);transform-origin:0 50%;">CHECK-IN</div>
<svg class="b" style="left:826.5px;top:282.0px;" width="13.4" height="12" viewBox="0 0 13.4 12"><path d="M8.9 2.5A4.75 4.75 0 1 0 10.1 8.2" fill="none" stroke="#41709a" stroke-width="1.05"/><path d="M4.2 4.5L7.4 7.7M7.4 4.5L4.2 7.7" stroke="#27406a" stroke-width="1.15"/><path d="M9 6.7H11.8" stroke="#35608c" stroke-width="1"/><path d="M11 5.2L13.2 6.9L10.8 8.3Z" fill="#35608c"/></svg>
<svg class="b" style="left:913.448px;top:281.11px;" width="13.104" height="12.48" viewBox="0 0 12.6 12"><path d="M7.6 1.8H2.2Q0.6 1.8 0.6 3.4V9.8Q0.6 11.4 2.2 11.4H9.6Q11.2 11.4 11.2 9.8V5.4" fill="#f3f8fd" stroke="#6a9dd0" stroke-width="1"/><path d="M6.6 6.1L10.7 1.7" stroke="#2b2f72" stroke-width="2.3" stroke-linecap="round"/><path d="M4.9 8L5.4 5.5L7.4 7.4Z" fill="#2b2f72"/></svg>
<svg class="b" style="left:931.5999999999999px;top:281.25px;" width="11.4" height="12.6" viewBox="0 0 11.4 12.6"><path d="M0.7 1.6Q0.7 0.6 1.7 0.6H5.8L9.5 4.2V10.6Q9.5 11.6 8.5 11.6H1.7Q0.7 11.6 0.7 10.6Z" fill="#f4f8fd" stroke="#5587b4" stroke-width="1.2"/><path d="M5.8 1V4H9" fill="none" stroke="#8fb2d2" stroke-width="0.6"/><circle cx="8.2" cy="9.9" r="2.85" fill="#43537f" stroke="#f4f8fd" stroke-width="0.5"/><path d="M6.8 9.9H9.6" stroke="#e8eefa" stroke-width="1"/></svg>
<svg class="b" style="left:949.5px;top:281.35px;" width="11" height="12.8" viewBox="0 0 11 12.8"><path d="M0.4 3.3Q0.6 1.9 3.2 1.5Q3.6 0.3 5.5 0.3Q7.4 0.3 7.8 1.5Q10.4 1.9 10.6 3.3Z" fill="#7eb1df"/><path d="M1.4 3.4V11Q1.4 12.2 2.6 12.2H8.4Q9.6 12.2 9.6 11V3.4" fill="#b4d2ef" stroke="#5d9ad2" stroke-width="1.1"/><path d="M3.9 4.8V10.6M5.5 4.8V10.6M7.1 4.8V10.6" stroke="#5d9ad2" stroke-width="0.85"/></svg>
<svg class="b" style="left:965.5px;top:282.35px;" width="13" height="10" viewBox="0 0 13 10"><path d="M0.6 5H12M7.6 0.8L12 5L7.6 9.2" fill="none" stroke="#3585cf" stroke-width="1.15" stroke-linecap="round" stroke-linejoin="round"/></svg>
<div class="b" style="left:70px;top:240.7px;width:127px;height:17px;border:1.2px solid #111;border-radius:1px;"></div>
<svg class="b" style="left:799.6px;top:243.1px;" width="61" height="8" viewBox="0 0 61 8"><path d="M5 4H60.6" stroke="#111" stroke-width="1.25"/><path d="M0.3 4L7 1.7V6.3Z" fill="#111"/></svg>
<svg class="b" style="left:757.8px;top:251.6px;" width="8.8" height="12.1" viewBox="0 0 8 11"><path d="M0.6 0.6V8.4L2.6 6.6L4.2 10L5.6 9.4L4 6H6.6Z" fill="#111" stroke="#fff" stroke-width="0.5"/></svg>
<div class="t" style="left:23px;top:295.80px;height:12px;line-height:12px;font-size:5px;color:#e7a0a8;">*</div>
<div class="b" style="left:992.8px;top:116px;width:7.2000000000000455px;height:391px;background:#fcfcfc;"></div>
<div class="b" style="left:997.3px;top:122px;width:1.2px;height:353px;background:#c6c6c6;"></div>
<svg class="b" style="left:996.4px;top:118px;" width="3" height="2" viewBox="0 0 3 2"><path d="M0 2L1.5 0L3 2Z" fill="#999"/></svg>
<svg class="b" style="left:996.4px;top:498px;" width="3" height="2" viewBox="0 0 3 2"><path d="M0 0L1.5 2L3 0Z" fill="#777"/></svg>
<div class="b" style="left:0px;top:502.4px;width:1000px;height:4.6px;background:#fbfbfb;border-top:0.6px solid #e4e4e4;"></div>
</body></html>
